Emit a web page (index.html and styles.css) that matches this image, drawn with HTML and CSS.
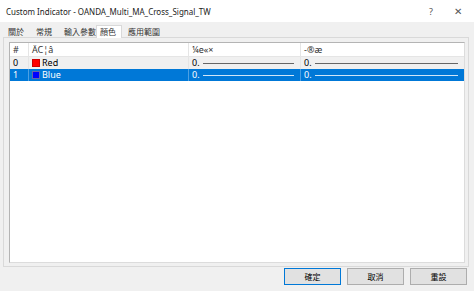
FILE: index.html
```html
<!DOCTYPE html>
<html lang="zh-Hant">
<head>
  <meta charset="UTF-8">
  <title>Custom Indicator</title>
  <link rel="stylesheet" href="styles.css">
</head>
<body>
<div class="dialog">
  <div class="titlebar">
    <span class="title">Custom Indicator - OANDA_Multi_MA_Cross_Signal_TW</span>
    <span class="ctrl help">?</span>
    <span class="ctrl close">✕</span>
  </div>
  <div class="tabs">
    <span class="tab">關於</span>
    <span class="tab">常規</span>
    <span class="tab">輸入參數</span>
    <span class="tab active">顏色</span>
    <span class="tab">應用範圍</span>
  </div>
  <div class="panel">
    <div class="list">
      <div class="row head">
        <div class="cell">#</div>
        <div class="cell">ÄC¦â</div>
        <div class="cell">¼e«×</div>
        <div class="cell">­-®æ</div>
      </div>
      <div class="row odd">
        <div class="cell">0</div>
        <div class="cell"><span class="swatch red"></span>Red</div>
        <div class="cell style">0.<span class="line"></span></div>
        <div class="cell style">0.<span class="line"></span></div>
      </div>
      <div class="row selected">
        <div class="cell">1</div>
        <div class="cell"><span class="swatch blue"></span>Blue</div>
        <div class="cell style">0.<span class="line"></span></div>
        <div class="cell style">0.<span class="line"></span></div>
      </div>
    </div>
  </div>
  <div class="buttons">
    <button class="btn default">確定</button>
    <button class="btn">取消</button>
    <button class="btn">重設</button>
  </div>
</div>
</body>
</html>
```
FILE: styles.css
```css
body {
    margin: 0;
    background: #f0f0f0;
    font-family: "Noto Sans", "Noto Sans CJK TC", sans-serif;
    font-size: 9px;
    color: #000;
}
.dialog {
    width: 474px;
    height: 291px;
    overflow: hidden;
}
.titlebar {
    height: 22px;
    background: #fff;
    display: flex;
    align-items: center;
}
.title {
    flex: 1;
    padding-left: 6px;
    font-size: 8px;
    color: #222;
}
.ctrl {
    color: #555;
    font-size: 9px;
}
.help {
    margin-right: 21px;
}
.close {
    margin-right: 12px;
    font-size: 10px;
}
.tabs {
    height: 15px;
    display: flex;
    align-items: flex-end;
    padding-left: 2px;
}
.tab {
    padding: 0 6px;
    font-family: "Noto Sans CJK TC", sans-serif;
    font-size: 8px;
    line-height: 11px;
    color: #333;
}
.tab.active {
    background: #fff;
    border: 1px solid #d9d9d9;
    border-bottom: none;
    margin-left: -6px;
    padding: 0 5px 1px 3px;
    margin-bottom: -1px;
    position: relative;
}
.panel {
    margin: 0 5px 0 3px;
    height: 221px;
    border: 1px solid #d9d9d9;
    padding: 4px 3px 3px 5px;
}
.list {
    height: 219px;
    background: #fff;
    border: 1px solid #b4b4b4;
    border-color: #b4b4b4 #dcdcdc #dcdcdc #b4b4b4;
}
.row {
    display: grid;
    grid-template-columns: 19px 160px 112px 1fr;
    height: 12px;
    line-height: 12px;
}
.row.head {
    height: 13px;
    line-height: 13px;
    border-bottom: 1px solid #e5e5e5;
    color: #333;
}
.cell {
    padding-left: 3px;
    border-right: 1px solid #e5e5e5;
    display: flex;
    align-items: center;
    white-space: nowrap;
    overflow: hidden;
}
.cell:last-child {
    border-right: none;
}
.row.odd {
    background: #f0f0f0;
}
.row.selected {
    background: #0078d7;
    color: #fff;
}
.row.selected .cell {
    border-right-color: #4da0e3;
}
.swatch {
    width: 8px;
    height: 8px;
    margin-right: 2px;
    box-sizing: border-box;
}
.swatch.red {
    background: #ff0000;
    border: 1px solid #c00;
}
.swatch.blue {
    background: #0000ff;
    border: 1px solid #66a;
}
.line {
    flex: 1;
    height: 1px;
    background: #666;
    margin: 0 6px 0 3px;
}
.selected .line {
    background: #d0e6f8;
}
.buttons {
    display: flex;
    justify-content: flex-end;
    gap: 6px;
    padding: 1px 7px 0 0;
}
.btn {
    width: 57px;
    height: 17px;
    padding: 0;
    font-family: "Noto Sans CJK TC", sans-serif;
    font-size: 8px;
    background: #e1e1e1;
    border: 1px solid #adadad;
    color: #000;
}
.btn.default {
    border-color: #0078d7;
}
```
